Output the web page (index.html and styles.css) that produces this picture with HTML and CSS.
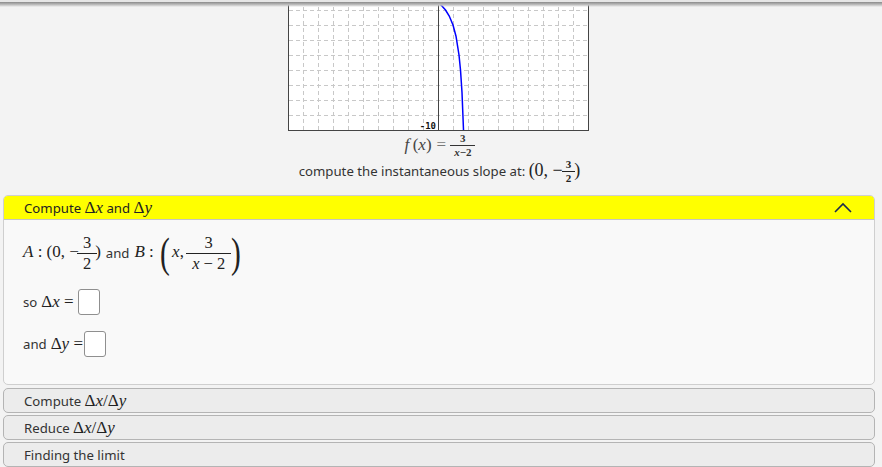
FILE: index.html
```html
<!DOCTYPE html>
<html lang="en">
<head>
    <meta charset="UTF-8">
    <title>Instantaneous slope</title>
    <link rel="stylesheet" href="styles.css">
</head>
<body>
    <div class="topshade"></div>

    <div class="question">
        <svg class="plot" width="301" height="131" viewBox="0 0 301 131">
            <rect x="0.5" y="-5" width="300" height="135.5" fill="#fff" stroke="#444"/>
            <g stroke="#c8c8c8" stroke-dasharray="4 3" stroke-width="1">
                <path d="M15.5 0V130M30.5 0V130M45.5 0V130M60.5 0V130M75.5 0V130M90.5 0V130M105.5 0V130M120.5 0V130M135.5 0V130M165.5 0V130M180.5 0V130M195.5 0V130M210.5 0V130M225.5 0V130M240.5 0V130M255.5 0V130M270.5 0V130M285.5 0V130"/>
                <path d="M1 10.5H300M1 25.5H300M1 40.5H300M1 55.5H300M1 70.5H300M1 85.5H300M1 100.5H300M1 115.5H300"/>
            </g>
            <path d="M150.5 0V130" stroke="#444"/>
            <text class="ticklabel" x="148" y="128.5" text-anchor="end">-10</text>
            <path d="M142 -2 L150 2.5 L153.75 5.7 L157.5 10 L161.25 16 L165 25 L168 36.25 L171 55 L172.5 70 L174 92.5 L175.5 130" fill="none" stroke="#0000ff" stroke-width="1.5"/>
            <path d="M0.5 130.5H300.5" stroke="#444"/>
        </svg>

        <div class="func">
            <span class="m"><i>f</i>&thinsp;(<i>x</i>)</span>
            <span class="m rel">=</span>
            <span class="frac tiny"><span class="num">3</span><span class="den"><i>x</i>−2</span></span>
        </div>

        <p class="prompt">compute the instantaneous slope at: <span class="m big">(0, −<span class="frac tiny"><span class="num">3</span><span class="den">2</span></span>)</span></p>
    </div>

    <div class="steps">
        <section class="step open">
            <header class="step-head">
                <span>Compute <span class="m">Δ<i>x</i></span> and <span class="m">Δ<i>y</i></span></span>
                <svg class="chevron" width="18" height="11" viewBox="0 0 18 11">
                    <polyline points="1,10 9,2 17,10" fill="none" stroke="#1c2b4f" stroke-width="1.6"/>
                </svg>
            </header>
            <div class="step-body">
                <div class="points">
                    <span class="m"><i>A</i> : (0, −<span class="frac"><span class="num">3</span><span class="den">2</span></span>)</span>
                    <span class="word">and</span>
                    <span class="m"><i>B</i> : <span class="paren">(</span><i>x</i>, <span class="frac"><span class="num">3</span><span class="den"><i>x</i> − 2</span></span><span class="paren">)</span></span>
                </div>
                <div class="answer">
                    so <span class="m">Δ<i>x</i> =</span><span class="box"></span>
                </div>
                <div class="answer">
                    and <span class="m">Δ<i>y</i> =</span><span class="box tight"></span>
                </div>
            </div>
        </section>

        <section class="step">
            <header class="step-head"><span>Compute <span class="m">Δ<i>x</i>/Δ<i>y</i></span></span></header>
        </section>
        <section class="step">
            <header class="step-head"><span>Reduce <span class="m">Δ<i>x</i>/Δ<i>y</i></span></span></header>
        </section>
        <section class="step">
            <header class="step-head"><span>Finding the limit</span></header>
        </section>
    </div>
</body>
</html>
```

FILE: styles.css
```css
body {
    margin: 0;
    background: #f3f3f3;
    font-family: "Noto Sans", Arial, sans-serif;
    font-size: 13.2px;
    color: #333;
}
.topshade {
    position: fixed;
    top: 0;
    left: 0;
    right: 0;
    height: 7px;
    background: linear-gradient(#e6e6e6 0, #e6e6e6 2px, #8a8a8a 2px, #c4c4c4 5px, rgba(243,243,243,0) 7px);
}
.question {
    display: flex;
    flex-direction: column;
    align-items: center;
    padding-right: 3px;
}
.plot {
    display: block;
    margin-left: -2px;
}
.ticklabel {
    font-family: "DejaVu Sans Mono", monospace;
    font-size: 9px;
    font-weight: bold;
    fill: #111;
}
.m {
    font-family: "Liberation Serif", "DejaVu Serif", serif;
    font-size: 17px;
    color: #222;
}
.m i {
    font-style: italic;
}
.func {
    display: flex;
    align-items: center;
    gap: 5px;
    height: 26px;
    margin-top: 1px;
}
.func .m {
    font-size: 17px;
    color: #444;
}
.func .rel {
    color: #777;
}
.frac {
    display: inline-flex;
    flex-direction: column;
    align-items: center;
    vertical-align: middle;
    font-family: "Liberation Serif", "DejaVu Serif", serif;
    font-size: 16.5px;
    line-height: 1.05;
    margin: 0 1px;
}
.frac .num {
    padding: 0 3px 2px;
    border-bottom: 1px solid currentColor;
    width: 100%;
    text-align: center;
}
.frac .den {
    padding: 1px 3px 0;
}
.frac.tiny {
    font-size: 11px;
    font-weight: bold;
    line-height: 1;
}
.frac.tiny .num {
    padding: 0 2px 1px;
}
.frac.tiny .den {
    padding: 1px 2px 0;
}
.prompt {
    margin: 0;
    height: 26px;
    line-height: 24px;
}
.prompt .big {
    font-size: 18px;
}
.steps {
    margin: 11px 7px 0 3px;
    display: flex;
    flex-direction: column;
    gap: 2px;
}
.step {
    border: 1px solid #b4b4b4;
    border-radius: 5px;
    background: #ececec;
}
.step-head {
    display: flex;
    align-items: center;
    justify-content: space-between;
    height: 23px;
    padding: 0 22px 0 20px;
    color: #333;
}
.step.open {
    border-color: #cfcfcf;
    background: #f9f9f9;
    margin-bottom: 1px;
}
.step.open .step-head {
    background: #ffff00;
    border-radius: 4px 4px 0 0;
    border-bottom: 1px solid #c4c4c4;
    color: #222;
}
.step-body {
    padding: 12px 19px 26px;
}
.points {
    display: flex;
    align-items: center;
    gap: 4px;
    height: 42px;
}
.points .word {
    margin: 0 1px;
    color: #333;
}
.paren {
    font-family: "Liberation Serif", serif;
    font-size: 42px;
    line-height: 1;
    vertical-align: middle;
    display: inline-block;
    transform: scaleX(0.7);
}
.answer {
    display: flex;
    align-items: center;
    gap: 4px;
    margin-top: 14px;
    height: 28px;
}
.box {
    width: 20px;
    height: 24px;
    border: 1px solid #8f8f8f;
    border-radius: 3px;
    background: #fff;
}
.box.tight {
    margin-left: -3px;
}
```
